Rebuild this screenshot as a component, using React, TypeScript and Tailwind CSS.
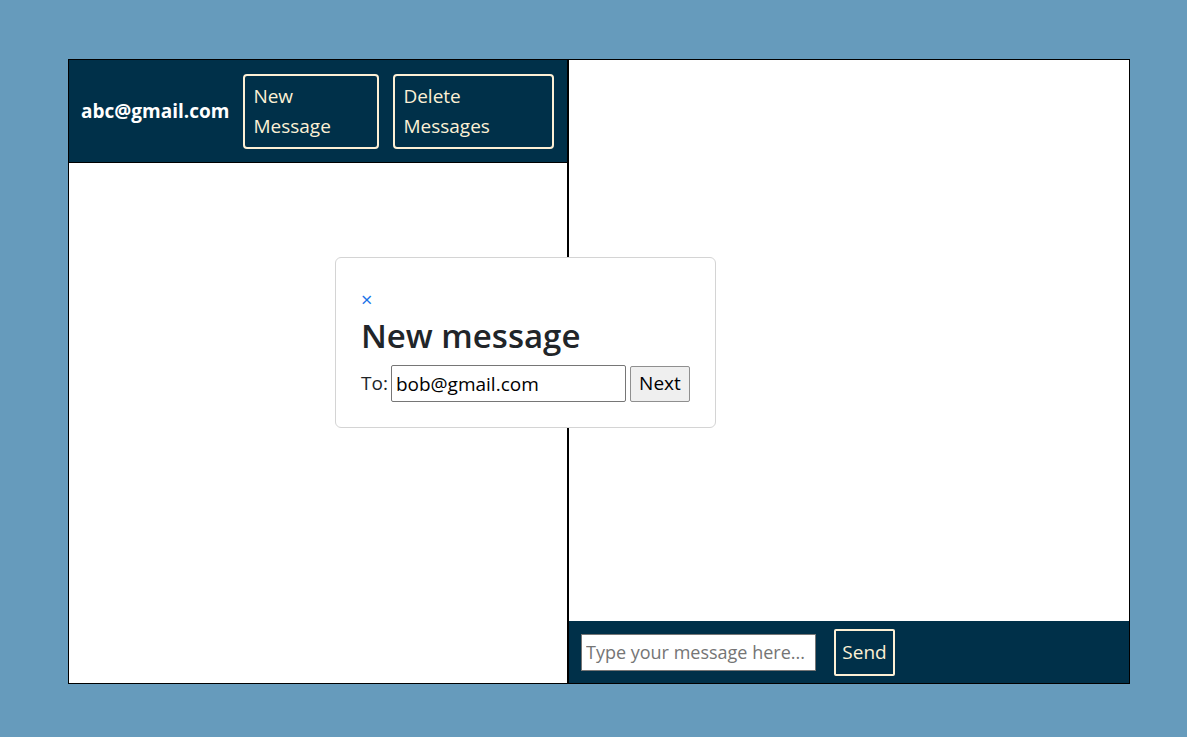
export default function App() {
  return (
    <div
      className="relative h-[737px] w-full bg-[#669bbc] pt-[59px] pl-[68px]"
      style={{ fontFamily: '"Open Sans", "Noto Sans", sans-serif' }}
    >
      <div className="flex h-[625px]">
        {/* left: conversations */}
        <div className="flex w-[500px] flex-col border border-black bg-white">
          <div className="flex h-[103px] items-center gap-[14px] border-b border-black bg-[#003049] px-3">
            <span className="text-[19px] font-bold text-white">abc@gmail.com</span>
            <button className="h-[75px] w-[136px] rounded-[4px] border-2 border-[#fdf0d5] px-2 text-left text-[19px] leading-[30px] text-[#fdf0d5]">
              New
              <br />
              Message
            </button>
            <button className="h-[75px] w-[161px] rounded-[4px] border-2 border-[#fdf0d5] px-2 text-left text-[19px] leading-[30px] text-[#fdf0d5]">
              Delete
              <br />
              Messages
            </button>
          </div>
          <div className="flex-1" />
        </div>

        {/* right: chat */}
        <div className="flex w-[562px] flex-col border border-black bg-white">
          <div className="flex-1" />
          <div className="flex h-[62px] items-center gap-[18px] bg-[#003049] px-3">
            <input
              placeholder="Type your message here..."
              className="h-[37px] w-[235px] border border-[#767676] bg-white px-1 text-[18px] text-black placeholder:text-[#757575] outline-none"
            />
            <button className="h-[47px] w-[61px] rounded-[2px] border-2 border-[#fdf0d5] text-[19px] text-[#fdf0d5]">
              Send
            </button>
          </div>
        </div>
      </div>

      {/* new message dialog */}
      <div className="absolute left-[335px] top-[257px] w-[381px] rounded-md border border-[#d4d4d4] bg-white px-[25px] pt-[30px] pb-[25px]">
        <button className="block text-[20px] leading-[24px] text-[#1a73e8]">×</button>
        <h1 className="mt-[3px] text-[33px] font-semibold leading-[42px] text-[#212529]">New message</h1>
        <div className="mt-[8px] flex items-center text-[19px] text-[#212529]">
          <span className="mr-[3px]">To:</span>
          <input
            defaultValue="bob@gmail.com"
            className="h-[37px] w-[235px] rounded-[2px] border border-[#767676] px-1 text-[19px] text-black outline-none"
          />
          <button className="ml-[4px] h-[36px] w-[61px] rounded-[2px] border border-[#8f8f8f] bg-[#efefef] text-[19px] text-black">
            Next
          </button>
        </div>
      </div>
    </div>
  );
}
